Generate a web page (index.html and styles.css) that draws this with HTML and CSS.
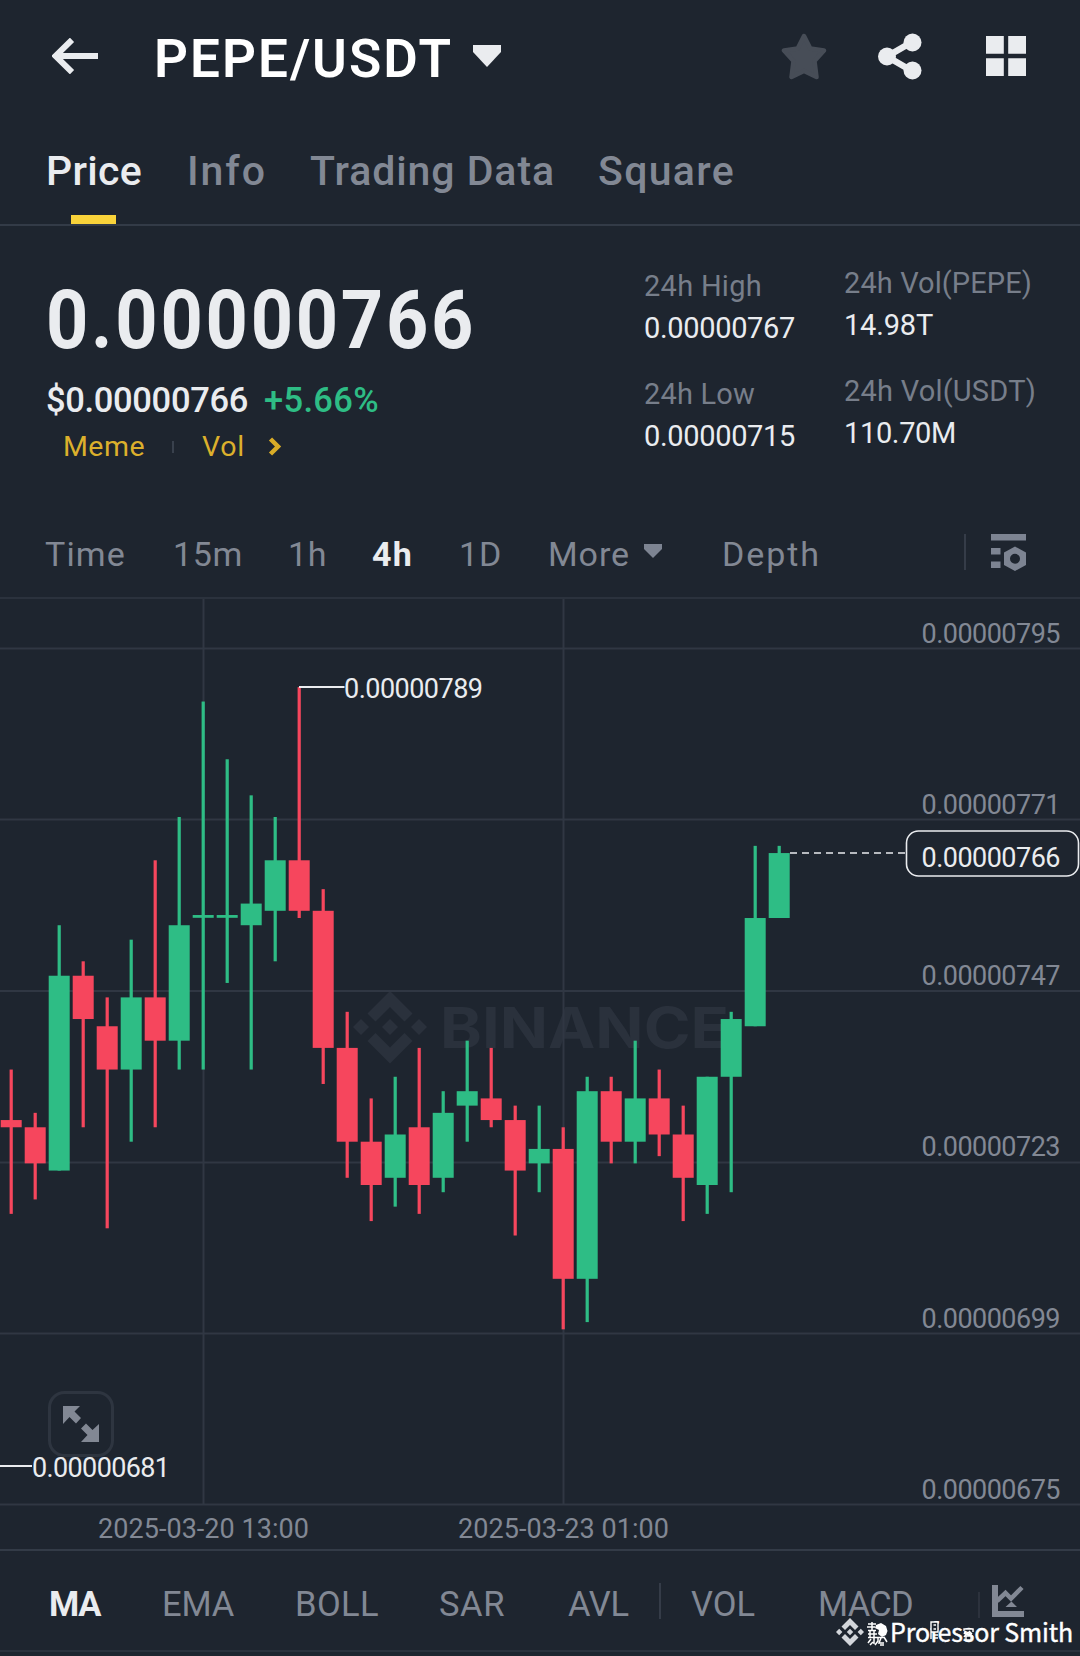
FILE: index.html
```html
<!DOCTYPE html>
<html lang="en">
<head>
<meta charset="utf-8">
<title>PEPE/USDT</title>
<link rel="stylesheet" href="styles.css">
</head>
<body>
<header class="header">
  <svg class="back" width="46" height="36" viewBox="0 0 46 36"><path d="M3 18H46M20 1.800L3.500 18L20 34.200" fill="none" stroke="#eaecef" stroke-width="6"/></svg>
  <h1 class="pair"><span data-fit="299">PEPE/USDT</span></h1>
  <svg class="pair-caret" width="28" height="22" viewBox="0 0 28 22"><path d="M0 0H28V7L14 22L0 7Z" fill="#eaecef"/></svg>
  <div class="actions">
    <svg width="46" height="47" viewBox="0 0 46 47"><path d="M23 3L29.300 15.500L43 17.500L33.500 28L35.500 44L23 38L10.500 44L12.500 28L3 17.500L16.700 15.500Z" fill="#474d57" stroke="#474d57" stroke-width="4.500" stroke-linejoin="round"/></svg>
    <svg width="44" height="47" viewBox="0 0 44 47"><path d="M34 9L9 23.500L34 38" fill="none" stroke="#eaecef" stroke-width="6.500"/><circle cx="34.500" cy="9.500" r="9"/><circle cx="9" cy="23.500" r="9"/><circle cx="34.500" cy="37.500" r="9"/></svg>
    <svg width="40" height="40" viewBox="0 0 40 40"><path d="M0 0h17.800v17.800H0zM22.200 0H40v17.800H22.200zM0 22.200h17.800V40H0zM22.200 22.200H40V40H22.200z"/></svg>
  </div>
</header>

<nav class="tabs">
  <a class="tab tab-active"><span data-fit="96">Price</span></a>
  <a class="tab"><span data-fit="80">Info</span></a>
  <a class="tab"><span data-fit="245">Trading Data</span></a>
  <a class="tab"><span data-fit="137">Square</span></a>
</nav>

<section class="summary">
  <div class="quote">
    <div class="last"><span data-fit="478">0.00000766</span></div>
    <div class="fiat"><span data-fit="202">$0.00000766</span><span class="change" data-fit="115">+5.66%</span></div>
    <div class="tags">
      <span data-fit="82">Meme</span><i class="tag-rule"></i><span data-fit="43">Vol</span>
      <svg width="14" height="19" viewBox="0 0 14 19"><path d="M2.500 2L10 9.500L2.500 17" fill="none" stroke="#d9ac27" stroke-width="4.500"/></svg>
    </div>
  </div>
  <dl class="stats">
    <dt><span data-fit="118">24h High</span></dt><dd><span data-fit="151">0.00000767</span></dd>
    <dt><span data-fit="111">24h Low</span></dt><dd><span data-fit="151">0.00000715</span></dd>
  </dl>
  <dl class="stats stats-volume">
    <dt><span data-fit="188">24h Vol(PEPE)</span></dt><dd><span data-fit="89">14.98T</span></dd>
    <dt><span data-fit="192">24h Vol(USDT)</span></dt><dd><span data-fit="112">110.70M</span></dd>
  </dl>
</section>

<nav class="intervals">
  <a><span data-fit="81">Time</span></a>
  <a><span data-fit="70">15m</span></a>
  <a><span data-fit="39">1h</span></a>
  <a class="current"><span data-fit="41">4h</span></a>
  <a><span data-fit="43">1D</span></a>
  <a class="more"><span data-fit="82">More</span><svg width="18" height="14" viewBox="0 0 18 14"><path d="M0 0H18V5L9 14L0 5Z"/></svg></a>
  <a><span data-fit="99">Depth</span></a>
  <i class="rule"></i>
  <svg width="35" height="38" viewBox="0 0 35 38"><path d="M0 0H35V6.500H0ZM0 14H9.500V20.500H0ZM0 27.500H9.500V34H0Z"/><path fill-rule="evenodd" d="M24 12.500L35 18.500V31L24 37L13 31V18.500ZM24 19.800A5 5 0 1 0 24 29.800A5 5 0 1 0 24 19.800Z"/></svg>
</nav>

<svg class="chart" width="1080" height="950" viewBox="0 599 1080 950">
  <g class="watermark">
    <path d="M390 991L412.500 1013.500L404.500 1021.500L390 1007L375.500 1021.500L367.500 1013.500Z M390 1063.500L412.500 1041L404.500 1033L390 1047.500L375.500 1033L367.500 1041Z M390 1019L398 1027L390 1035L382 1027Z M361 1019L369 1027L361 1035L353 1027Z M419 1019L427 1027L419 1035L411 1027Z"/>
    <text x="440" y="1048" textLength="289" lengthAdjust="spacingAndGlyphs">BINANCE</text>
  </g>
  <path class="grid" d="M0 648.500H1080M0 819.500H1080M0 991H1080M0 1162.500H1080M0 1333.500H1080M0 1504.500H1080M203.500 599V1504M563.500 599V1504"/>
  <g id="candles"></g>
  <g class="axis">
    <text x="921.500" y="643" textLength="139">0.00000795</text>
    <text x="921.500" y="814" textLength="139">0.00000771</text>
    <text x="921.500" y="985" textLength="139">0.00000747</text>
    <text x="921.500" y="1156" textLength="139">0.00000723</text>
    <text x="921.500" y="1327.500" textLength="139">0.00000699</text>
    <text x="921.500" y="1498.500" textLength="139">0.00000675</text>
    <text x="98" y="1538" textLength="211">2025-03-20 13:00</text>
    <text x="458" y="1538" textLength="211">2025-03-23 01:00</text>
  </g>
  <path d="M790 853H906" fill="none" stroke="#eaecef" stroke-width="1.600" stroke-dasharray="7 5"/>
  <rect x="906.500" y="831" width="172" height="45" rx="12" fill="#1e252f" stroke="#eaecef" stroke-width="1.600"/>
  <g class="expand">
    <rect x="49.500" y="1392.500" width="63" height="63" rx="15" fill="none" stroke="#2e3540" stroke-width="3"/>
    <path d="M63 1406H80L74.500 1411.500L81 1418L76 1423.500L69.500 1417L63 1424ZM99 1442H81L87.500 1435L81 1428.500L86 1423.500L92.500 1430L99 1424Z"/>
  </g>
  <path d="M299 687H344.500M0 1466H32" fill="none" stroke="#eaecef" stroke-width="1.800"/>
  <g class="mark">
    <text x="344" y="698" textLength="139">0.00000789</text>
    <text x="32" y="1477" textLength="138">0.00000681</text>
    <text x="921.500" y="867" textLength="139">0.00000766</text>
  </g>
</svg>

<nav class="indicators">
  <a class="current"><span data-fit="51">MA</span></a>
  <a><span data-fit="72">EMA</span></a>
  <a><span data-fit="84">BOLL</span></a>
  <a><span data-fit="66">SAR</span></a>
  <a><span data-fit="61">AVL</span></a>
  <i class="rule"></i>
  <a><span data-fit="64">VOL</span></a>
  <a><span data-fit="95">MACD</span></a>
  <i class="rule rule-short"></i>
  <svg width="32" height="32" viewBox="0 0 32 32"><path d="M0 0H6V26H32V32H0ZM13.500 22L19.500 16.500L25 22Z"/><path d="M5 16L13.500 8L19 13.500L30 2.500" fill="none" stroke="#828894" stroke-width="4.500"/></svg>
</nav>

<div class="author">
  <svg width="28" height="28" viewBox="0 0 28 28"><path d="M14 0L22.500 8.500L19 12L14 7L9 12L5.500 8.500ZM14 28L22.500 19.500L19 16L14 21L9 16L5.500 19.500ZM14 10.800L17.200 14L14 17.200L10.800 14ZM3.200 10.800L6.400 14L3.200 17.200L0 14ZM24.800 10.800L28 14L24.800 17.200L21.600 14Z"/></svg>
  <svg class="seal" width="21" height="24" viewBox="0 0 21 24">
    <path d="M9 3L14 1L19 4L20.500 9L19 13L15 15L11 12L12 8L8 6Z" fill="#fff"/>
    <path d="M1 2H9M5 0V8M0 5H8M1 8.500H9M1 12H10M3 9V15M7 9V15M1 15.500H18M4 17L1 21M7 16V22M11 15V19L8 23M14 16L12 21H17M17 15L20 20M3 23L6 20M13 23H17" fill="none" stroke="#fff" stroke-width="1.500"/>
  </svg>
  <span class="name"><span data-fit="183">Professor Smith</span>
    <svg class="glitch glitch-tall" width="9" height="19" viewBox="0 0 9 19"><path d="M1 1H8V11H1ZM1 18V1M3.500 4H6M3.500 8H6M4 14H8M4 17H8" /></svg>
    <svg class="glitch glitch-small" width="11" height="13" viewBox="0 0 11 13"><path d="M1 3V1H10V4M3 3L1 6M6 3L9 6M5 4L1 9M5 4L10 9M3 8H8V12H3Z"/></svg>
  </span>
</div>
<script src="app.js"></script>
</body>
</html>
```
FILE: styles.css
```css
* { box-sizing: border-box; }
body {
  margin: 0;
  width: 1080px;
  height: 1656px;
  overflow: hidden;
  position: relative;
  background: #1e252f;
  color: #eaecef;
  font-family: Roboto, "Liberation Sans", sans-serif;
}
svg { display: block; flex: none; }
span { white-space: nowrap; }
a, h1, dl, dt, dd { margin: 0; font-weight: 400; }

.header { display: flex; align-items: center; height: 112px; padding: 0 54px 0 52px; }
.pair { margin-left: 56px; padding-top: 6px; width: 301px; font-size: 53px; font-weight: 600; line-height: 106px; color: #fff; }
.pair-caret { margin-left: 18px; }
.actions { display: flex; align-items: center; margin-left: auto; fill: #eaecef; }
.actions svg:nth-child(2) { margin-left: 51px; }
.actions svg:nth-child(3) { margin-left: 64px; }

.tabs {
  display: grid;
  grid-template-columns: 141px 123px 288px auto;
  height: 114px;
  padding-left: 46px;
  border-bottom: 2px solid #333b47;
}
.tab { position: relative; height: 112px; font-size: 41px; font-weight: 500; line-height: 118px; color: #828894; }
.tab-active { color: #eaecef; }
.tab-active::after { content: ""; position: absolute; left: 25px; bottom: 0; width: 45px; height: 9px; background: #f9d33a; }

.summary { display: grid; grid-template-columns: 598px 200px auto; height: 288px; padding-left: 46px; }
.quote { padding-top: 38px; }
.last { height: 112px; font-size: 82px; font-weight: 700; line-height: 112px; transform: scaleX(.9); transform-origin: 0 0; }
.fiat { display: flex; gap: 16px; height: 48px; font-size: 34.5px; font-weight: 500; line-height: 48px; }
.change { color: #2ebd85; }
.tags { display: flex; align-items: center; height: 45px; padding-left: 17px; font-size: 28.5px; color: #dcb02c; }
.tag-rule { width: 2px; height: 12px; margin: 0 28px 0 27px; background: #39414d; }
.tags svg { margin-left: 23px; }
.stats { padding-top: 39px; font-size: 29px; line-height: 42px; }
.stats-volume { padding-top: 36px; }
.stats dt { color: #777e8a; }
.stats dd + dt { margin-top: 24px; }

.intervals {
  display: grid;
  grid-template-columns: 128px 115px 84px 87px 89px 174px 242px 27px auto;
  align-items: center;
  height: 85px;
  padding-left: 45px;
  border-bottom: 2px solid #2b323d;
  font-size: 34px;
  line-height: 80px;
  color: #828894;
}
.intervals a { margin-top: -3px; }
.intervals svg { fill: #7d8492; margin-top: -6px; }
.intervals .more { display: flex; align-items: center; gap: 14px; }
.current { color: #eaecef; font-weight: 700; }
.rule { width: 2px; height: 36px; background: #353c48; margin-top: -8px; }

.grid { fill: none; stroke: #303743; stroke-width: 2; }
.watermark { fill: #2a313c; font: 700 57px Inter, sans-serif; }
.axis { fill: #828894; font-size: 27px; }
.mark { fill: #eaecef; font-size: 27px; }
.expand path { fill: #828894; }
.up { fill: #2ebd85; }
.down { fill: #f6465d; }

.indicators {
  display: grid;
  grid-template-columns: 113px 133px 144px 129px 91px 32px 127px 160px 14px auto;
  align-items: center;
  height: 103px;
  padding: 8px 0 0 49px;
  border-top: 2px solid #333b47;
  border-bottom: 2px solid #2b323d;
  font-size: 34.5px;
  line-height: 91px;
  color: #828894;
}
.indicators svg { fill: #828894; margin-top: -8px; }
.rule-short { height: 26px; margin-top: 0; opacity: .6; }

.author {
  position: absolute;
  left: 836px;
  top: 1618px;
  display: flex;
  align-items: center;
  height: 28px;
  fill: #d3d6db;
  color: #fff;
  font: 400 25px/28px "Noto Sans CJK SC", sans-serif;
}
.seal { margin: 3px 2px 0 3px; }
.name { position: relative; margin-top: -3px; -webkit-text-stroke: .4px #fff; }
.glitch { position: absolute; fill: #1e252f; stroke: #fff; stroke-width: 1.4; }
.glitch-tall { left: 40px; top: 4px; }
.glitch-small { left: 73px; top: 11px; }
```
FILE: app.js
```js
// [open, high, low, close] in 1e-8 USDT, one entry per 4h candle
const candles = [
  [729,736,716,728],[728,730,718,723],[722,756,722,749],[749,751,728,743],
  [742,746,714,736],[736,754,726,746],[746,765,728,740],[740,771,736,756],
  [757,787,736,757],[757,779,748,757],[756,774,736,759],[758,771,751,765],
  [765,789,757,758],[758,761,734,739],[739,744,721,726],[726,732,715,720],
  [721,735,717,727],[728,739,716,720],[721,733,719,730],[731,740,726,733],
  [732,739,728,729],[729,731,713,722],[723,731,719,725],[725,728,700,707],
  [707,735,701,733],[733,735,723,726],[726,740,723,732],[732,736,724,727],
  [727,731,715,721],[720,735,716,735],[735,744,719,743],[742,767,742,757],
  [757,767,757,766]
];
const y = price => 687.1 + (789 - price) * 7.216;
const layer = document.getElementById('candles');

function bar(x, top, width, height, cls) {
  const r = document.createElementNS('http://www.w3.org/2000/svg', 'rect');
  r.setAttribute('x', x);
  r.setAttribute('y', top);
  r.setAttribute('width', width);
  r.setAttribute('height', height);
  r.setAttribute('class', cls);
  layer.append(r);
}

candles.forEach(([open, high, low, close], i) => {
  const x = 11.2 + i * 24;
  const cls = close >= open ? 'up' : 'down';
  bar(x - 1.6, y(high), 3.2, y(low) - y(high), cls);
  if (open === close) bar(x - 10.5, y(open) - 3, 21, 2.8, cls);
  else bar(x - 10.5, y(Math.max(open, close)), 21, Math.abs(y(open) - y(close)), cls);
});

document.querySelectorAll('[data-fit]').forEach(el => {
  const spare = el.dataset.fit - el.getBoundingClientRect().width / (el.closest('.last') ? 0.9 : 1);
  el.style.letterSpacing = spare / el.textContent.length + 'px';
});
```
